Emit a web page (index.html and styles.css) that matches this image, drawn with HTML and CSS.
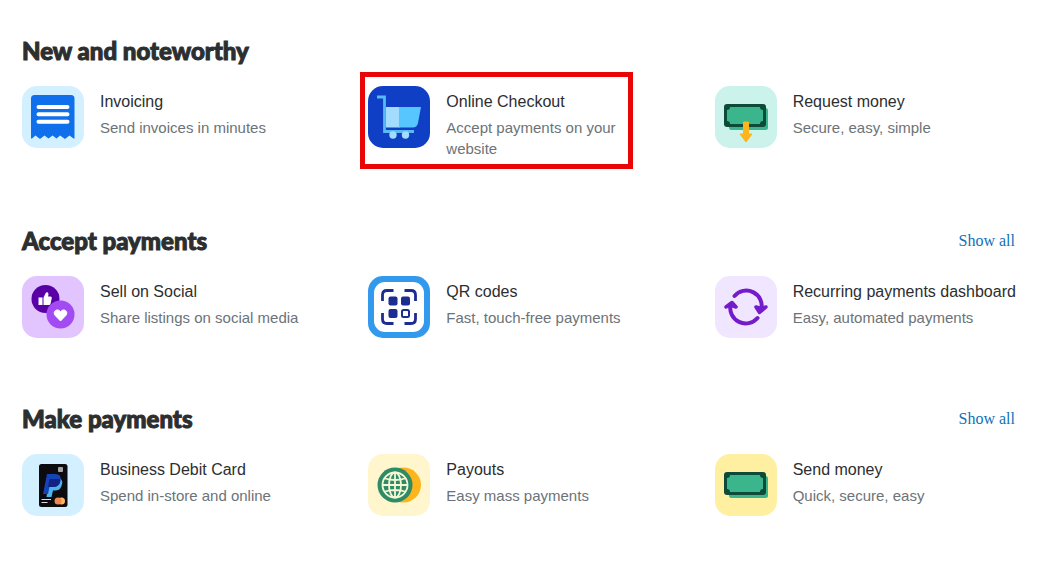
FILE: index.html
```html
<!DOCTYPE html>
<html lang="en">
<head>
<meta charset="utf-8">
<meta name="viewport" content="width=device-width, initial-scale=1">
<title>Business tools</title>
<link rel="stylesheet" href="styles.css">
</head>
<body>
<main class="tools">
  <section class="group">
    <header class="group-head"><h2>New and noteworthy</h2></header>
    <div class="grid">
      <a class="card" href="#">
        <svg class="icon" viewBox="0 0 62 62" aria-hidden="true">
          <rect width="62" height="62" rx="15" fill="#d2f0ff"/>
          <path d="M9 12.500Q9 9 12.500 9H49Q52.500 9 52.500 12.500V52.500H51.500L47.500 49.500L43 53L38 49.500L34.500 52.500L30.500 49.500L26.500 52.500L22.500 49.500L18 53L13.500 49.500L10 52.500H9Z" fill="#1070eb"/>
          <path d="M16.500 21H45.500M16.500 28.300H45.500M16.500 35.700H45.500" stroke="#fff" stroke-width="4" stroke-linecap="round"/>
        </svg>
        <span class="text"><span class="title">Invoicing</span><span class="desc">Send invoices in minutes</span></span>
      </a>
      <a class="card highlighted" href="#">
        <svg class="icon" viewBox="0 0 62 62" aria-hidden="true">
          <rect width="62" height="62" rx="15" fill="#0f3fc4"/>
          <path d="M18 21H32V41.500H18Z" fill="#a3dcff"/>
          <path d="M31 21H53L50 37Q49 41.500 44.500 41.500H31Z" fill="#57c6ff"/>
          <path d="M9 11H16.500V45.500H46" fill="none" stroke="#58b9f7" stroke-width="2.800"/>
          <circle cx="25" cy="49" r="3.700" fill="#a3dcff"/><circle cx="37.500" cy="49" r="3.700" fill="#a3dcff"/>
        </svg>
        <span class="text"><span class="title">Online Checkout</span><span class="desc">Accept payments on your website</span></span>
      </a>
      <a class="card" href="#">
        <svg class="icon" viewBox="0 0 62 62" aria-hidden="true">
          <rect width="62" height="62" rx="15" fill="#ccf3eb"/>
          <rect x="14" y="22" width="39" height="22" rx="2.500" fill="#3bb58b"/>
          <rect x="9" y="18" width="42" height="23" rx="3" fill="#0d4a37"/>
          <path d="M15 21H45Q45 24 48 24V35Q45 35 45 38H15Q15 35 12 35V24Q15 24 15 21Z" fill="#3bb58b"/>
          <path d="M28.500 36H33.500V48H37L31 56L25 48H28.500Z" fill="#fcb51d" stroke="#fcb51d" stroke-linejoin="round"/>
        </svg>
        <span class="text"><span class="title">Request money</span><span class="desc">Secure, easy, simple</span></span>
      </a>
    </div>
  </section>

  <section class="group">
    <header class="group-head"><h2>Accept payments</h2><a class="more" href="#">Show all</a></header>
    <div class="grid">
      <a class="card" href="#">
        <svg class="icon" viewBox="0 0 62 62" aria-hidden="true">
          <rect width="62" height="62" rx="15" fill="#e2c4ff"/>
          <circle cx="23.500" cy="23" r="14" fill="#5800a6"/>
          <path d="M16.500 21.500H20.500V29H16.500ZM21.500 21.500L24 16.500Q26.500 15.500 26.500 18.500L26 20.500H28.500Q30 20.500 29.800 22L28.500 28Q28.200 29 27 29H21.500Z" fill="#fff"/>
          <circle cx="38.500" cy="38.500" r="14" fill="#a24bf3"/>
          <path d="M38.500 45L33.200 39.500C30 35.500 35.500 31.500 38.500 35.800C41.500 31.500 47 35.500 43.800 39.500Z" fill="#fff" stroke="#fff" stroke-linejoin="round"/>
        </svg>
        <span class="text"><span class="title">Sell on Social</span><span class="desc">Share listings on social media</span></span>
      </a>
      <a class="card" href="#">
        <svg class="icon" viewBox="0 0 62 62" aria-hidden="true">
          <rect width="62" height="62" rx="15" fill="#3299ed"/>
          <rect x="6" y="6" width="50" height="50" rx="11" fill="#fff"/>
          <g fill="none" stroke="#1c2d91" stroke-width="2.800">
            <path d="M14.500 25V19Q14.500 14.500 19 14.500H25.500M36.500 14.500H43Q47.500 14.500 47.500 19V25M47.500 37V43Q47.500 47.500 43 47.500H36.500M25.500 47.500H19Q14.500 47.500 14.500 43V37"/>
            <rect x="34" y="34" width="7" height="7" rx="1.500" stroke-width="2"/>
          </g>
          <g fill="#1c2d91"><rect x="20.500" y="20.500" width="9" height="9" rx="2"/><rect x="33" y="20.500" width="9" height="9" rx="2"/><rect x="20.500" y="33" width="9" height="9" rx="2"/></g>
        </svg>
        <span class="text"><span class="title">QR codes</span><span class="desc">Fast, touch-free payments</span></span>
      </a>
      <a class="card" href="#">
        <svg class="icon" viewBox="0 0 62 62" aria-hidden="true">
          <rect width="62" height="62" rx="15" fill="#f1e6ff"/>
          <path d="M19.500 20A15.500 15.500 0 0 1 46.500 33M42.500 42A15.500 15.500 0 0 1 15.500 29" fill="none" stroke="#741cc9" stroke-width="4" stroke-linecap="round"/>
          <path d="M41 31L46.500 32.500L51 31L44.500 36.500ZM11 31L17 26.500L21 31L15.500 29Z" fill="#741cc9" stroke="#741cc9" stroke-width="3.500" stroke-linejoin="round"/>
        </svg>
        <span class="text"><span class="title">Recurring payments dashboard</span><span class="desc">Easy, automated payments</span></span>
      </a>
    </div>
  </section>

  <section class="group">
    <header class="group-head"><h2>Make payments</h2><a class="more" href="#">Show all</a></header>
    <div class="grid">
      <a class="card" href="#">
        <svg class="icon" viewBox="0 0 62 62" aria-hidden="true">
          <rect width="62" height="62" rx="15" fill="#d2f0ff"/>
          <rect x="17" y="10" width="28.500" height="43" rx="2.500" fill="#0b0b10"/>
          <rect x="36" y="13" width="5" height="5" rx="1" fill="#aaa3a5"/>
          <path d="M27 24H37Q42 26 39.500 32Q38 36.500 33 36.500H31L29.500 43H24.500Z" fill="#4eb4ee"/>
          <path d="M25 20H33Q40 20 38.500 27Q37 33 31 33H27.500L26 40H21Z" fill="#1643b8"/>
          <path d="M27.500 25H37.500Q38.500 26 38 28Q37 33 31 33H26Z" fill="#122481"/>
          <path d="M19.500 45.500H29M19.500 48.500H25.500" stroke="#ddd" stroke-width="1.200"/>
          <circle cx="39.500" cy="47" r="3.500" fill="#ffb35c"/><circle cx="36" cy="47" r="3.500" fill="#ee8851"/>
        </svg>
        <span class="text"><span class="title">Business Debit Card</span><span class="desc">Spend in-store and online</span></span>
      </a>
      <a class="card" href="#">
        <svg class="icon" viewBox="0 0 62 62" aria-hidden="true">
          <rect width="62" height="62" rx="15" fill="#fff6ce"/>
          <circle cx="35.500" cy="31" r="17.500" fill="#fcb51d"/>
          <circle cx="27" cy="31" r="17.500" fill="#2f8a66"/>
          <g fill="none" stroke="#f6f8d5" stroke-width="1.800">
            <circle cx="27" cy="31" r="12.500"/><ellipse cx="27" cy="31" rx="6" ry="12.500"/>
            <path d="M27 18.500V43.500M14.500 31H39.500M17 24.500Q27 27.500 37 24.500M17 37.500Q27 34.500 37 37.500"/>
          </g>
        </svg>
        <span class="text"><span class="title">Payouts</span><span class="desc">Easy mass payments</span></span>
      </a>
      <a class="card" href="#">
        <svg class="icon" viewBox="0 0 62 62" aria-hidden="true">
          <rect width="62" height="62" rx="15" fill="#fff0a1"/>
          <rect x="14" y="22" width="39" height="22" rx="2.500" fill="#3bb58b"/>
          <rect x="9" y="18" width="42" height="23" rx="3" fill="#0d4a37"/>
          <path d="M15 21H45Q45 24 48 24V35Q45 35 45 38H15Q15 35 12 35V24Q15 24 15 21Z" fill="#3bb58b"/>
        </svg>
        <span class="text"><span class="title">Send money</span><span class="desc">Quick, secure, easy</span></span>
      </a>
    </div>
  </section>
</main>
</body>
</html>
```
FILE: styles.css
```css
* {
  box-sizing: border-box;
}

body {
  margin: 0;
  background: #fff;
  color: #2c2e2f;
  font-family: "Liberation Sans", Arial, sans-serif;
  font-size: 16px;
}

.tools {
  display: flex;
  flex-direction: column;
  gap: 64px;
  padding: 34px 43px 34px 22px;
}

.group {
  display: flex;
  flex-direction: column;
  gap: 18px;
}

.group-head {
  display: flex;
  align-items: center;
  justify-content: space-between;
}

.group-head h2 {
  margin: 0;
  font-family: Lato, sans-serif;
  font-size: 24px;
  font-weight: 900;
  line-height: 34px;
  -webkit-text-stroke: 1px currentColor;
}

.more {
  color: #1072b8;
  font-family: "Liberation Serif", "Times New Roman", serif;
  font-size: 16px;
  text-decoration: none;
}

.grid {
  display: grid;
  grid-template-columns: repeat(3, minmax(0, 1fr));
  gap: 46px;
}

.card {
  position: relative;
  display: flex;
  align-items: flex-start;
  gap: 16px;
  color: inherit;
  text-decoration: none;
}

.icon {
  flex: none;
  width: 62px;
  height: 62px;
}

.text {
  display: flex;
  flex-direction: column;
  gap: 4px;
  padding: 5px 0 1px;
}

.title {
  line-height: 22px;
  white-space: nowrap;
}

.desc {
  max-width: 210px;
  color: #6c7378;
  font-size: 15px;
  line-height: 21px;
}

.highlighted::after {
  content: "";
  position: absolute;
  inset: -14px 36px -9px -8px;
  border: 5px solid #ea0507;
}
```
